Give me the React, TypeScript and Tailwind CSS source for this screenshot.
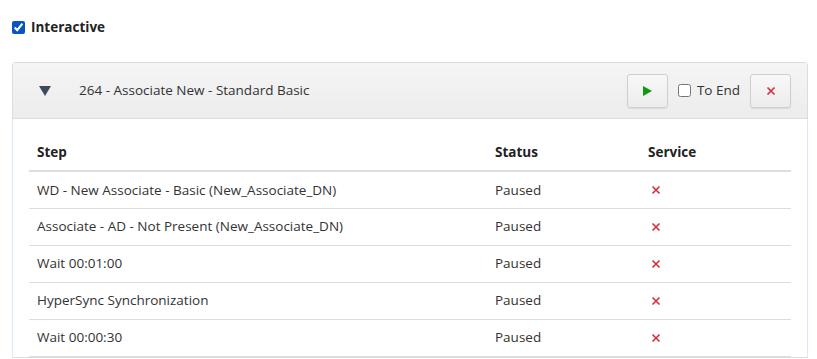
import React, { useState } from "react";

interface Step {
  name: string;
  status: string;
}

const steps: Step[] = [
  { name: "WD - New Associate - Basic (New_Associate_DN)", status: "Paused" },
  { name: "Associate - AD - Not Present (New_Associate_DN)", status: "Paused" },
  { name: "Wait 00:01:00", status: "Paused" },
  { name: "HyperSync Synchronization", status: "Paused" },
  { name: "Wait 00:00:30", status: "Paused" },
];

function XMark({ className }: { className?: string }) {
  return (
    <svg viewBox="0 0 10 10" className={className}>
      <path d="M1.5 1.5 L8.5 8.5 M8.5 1.5 L1.5 8.5" stroke="currentColor" strokeWidth="1.7" fill="none" />
    </svg>
  );
}

export default function App() {
  const [interactive, setInteractive] = useState(true);
  const [toEnd, setToEnd] = useState(false);

  return (
    <div className="w-[817px] h-[359px] overflow-hidden bg-white text-[#333] font-['Open_Sans',sans-serif] text-[13.5px]">
      {/* Interactive toggle */}
      <label className="flex gap-[6px] pl-[12px] pt-[20px] h-[62px] items-start">
        <input
          type="checkbox"
          checked={interactive}
          onChange={() => setInteractive(!interactive)}
          className="w-[13px] h-[13px] mt-[1px] accent-[#0b6cf5]"
        />
        <span className="font-bold text-[13.5px] leading-[15px] text-[#222]">Interactive</span>
      </label>

      {/* Workflow panel */}
      <div className="ml-[12px] w-[796px] border border-[#dcdcdc] rounded-t-[3px]">
        <div className="h-[56px] flex items-center bg-gradient-to-b from-[#f5f5f5] to-[#ececec] border-b border-[#dcdcdc] pl-[26px] pr-[16px]">
          <svg viewBox="0 0 12 10" className="w-[12px] h-[10px] text-[#3d4a5e]">
            <path d="M0 0 H12 L6 10 Z" fill="currentColor" />
          </svg>
          <span className="ml-[28px] text-[#333] flex-1">264 - Associate New - Standard Basic</span>
          <button className="w-[41px] h-[34px] flex items-center justify-center bg-gradient-to-b from-[#f8f8f8] to-[#ececec] border border-[#cfcfcf] rounded-[3px] shadow-[0_1px_1px_rgba(0,0,0,0.08)]">
            <svg viewBox="0 0 10 10" className="w-[10px] h-[10px]">
              <path d="M1 0 L10 5 L1 10 Z" fill="#109910" />
            </svg>
          </button>
          <label className="ml-[10px] flex items-center gap-[6px] text-[#333]">
            <input
              type="checkbox"
              checked={toEnd}
              onChange={() => setToEnd(!toEnd)}
              className="w-[13px] h-[13px]"
            />
            <span>To End</span>
          </label>
          <button className="ml-[10px] w-[41px] h-[34px] flex items-center justify-center bg-gradient-to-b from-[#f8f8f8] to-[#ececec] border border-[#cfcfcf] rounded-[3px] shadow-[0_1px_1px_rgba(0,0,0,0.08)]">
            <XMark className="w-[10px] h-[10px] text-[#d9303a]" />
          </button>
        </div>

        <div className="border-x border-[#dce8f5] -mx-px px-[16px] pt-[16px]">
          <table className="w-[762px] border-collapse">
            <thead>
              <tr className="border-b-2 border-[#dddddd]">
                <th className="text-left font-bold text-[#222] h-[36px] pl-[8px] w-[458px]">Step</th>
                <th className="text-left font-bold text-[#222] pl-[8px] w-[153px]">Status</th>
                <th className="text-left font-bold text-[#222] pl-[8px]">Service</th>
              </tr>
            </thead>
            <tbody>
              {steps.map((s) => (
                <tr key={s.name} className="border-b border-[#dddddd]">
                  <td className="h-[37px] pl-[8px]">{s.name}</td>
                  <td className="pl-[8px]">{s.status}</td>
                  <td className="pl-[11px]">
                    <XMark className="w-[10px] h-[10px] text-[#d9303a]" />
                  </td>
                </tr>
              ))}
            </tbody>
          </table>
        </div>
      </div>
    </div>
  );
}
